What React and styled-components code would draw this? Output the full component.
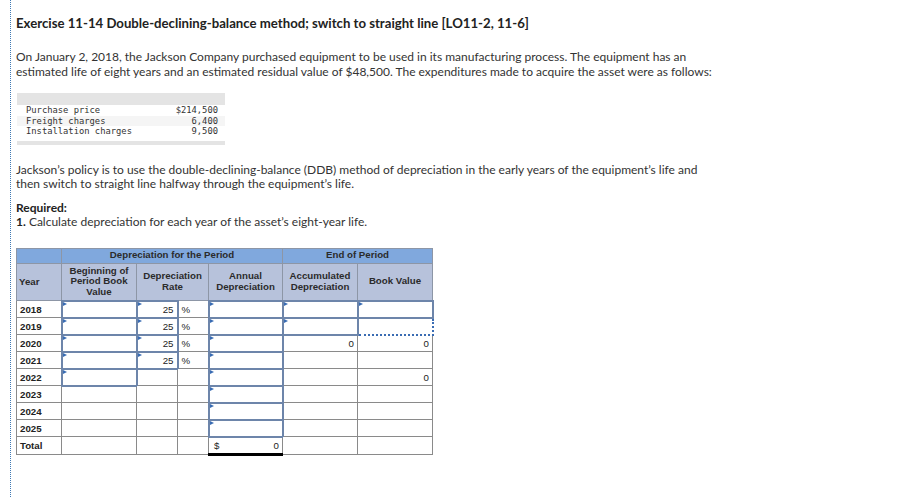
import React from "react";
import styled, { createGlobalStyle, css } from "styled-components";

const Global = createGlobalStyle`
  html, body { margin: 0; padding: 0; background: #fff; }
  body { font-family: Lato, "Open Sans", sans-serif; color: #333; }
`;

const Page = styled.div`
  margin-left: 10px;
  border-left: 1px dotted #3f79b4;
  min-height: 497px;
  box-sizing: border-box;
  padding: 15px 0 0 5px;
  display: flex;
  flex-direction: column;
  align-items: flex-start;
`;

const Title = styled.h1`
  margin: 0;
  font-size: 13.2px;
  line-height: 16px;
  font-weight: 700;
  color: #222;
`;

const Para = styled.p`
  margin: ${(p) => p.$mt || 0}px 0 0 0;
  font-size: 12px;
  line-height: ${(p) => p.$lh || 15}px;
  color: #333;
`;

const Strong = styled.strong`
  font-weight: 700;
  color: #222;
`;

const CostBox = styled.table`
  margin: 14px 0 0 1px;
  width: 208px;
  border-collapse: collapse;
  font-family: "DejaVu Sans Mono", "Liberation Mono", monospace;
  font-size: 8.8px;
  color: #333;
`;

const Band = styled.td`
  background: #e4e4e4;
  height: ${(p) => p.$h}px;
  padding: 0;
`;

const Spacer = styled.td`
  height: ${(p) => p.$h}px;
  padding: 0;
  background: #fff;
`;

const CostRow = styled.tr`
  background: ${(p) => (p.$alt ? "#f5f5f5" : "#fff")};
`;

const CostLabel = styled.td`
  padding: 0 0 0 9px;
  height: 10.5px;
  line-height: 10.5px;
  white-space: pre;
  font-family: "DejaVu Sans Mono", "Liberation Mono", monospace;
  font-size: 8.8px;
  color: #333;
`;

const CostValue = styled(CostLabel)`
  padding: 0 7px 0 0;
  text-align: right;
`;

const Grid = styled.table`
  margin-top: 19px;
  border-collapse: collapse;
  table-layout: fixed;
  font-family: "Liberation Sans", Arial, sans-serif;
  font-size: 9.7px;
  color: #222;
`;

const Col = styled.col`
  width: ${(p) => p.$w}px;
`;

const Head = styled.th`
  border: 1px solid #8d96a6;
  padding: 0 2px;
  font-family: "Liberation Sans", Arial, sans-serif;
  font-size: 9.7px;
  font-weight: 700;
  color: #2b2b2b;
  line-height: 10.5px;
  text-align: ${(p) => p.$align || "center"};
  background: ${(p) => (p.$top ? "#80a8dd" : "#b7c2db")};
  height: ${(p) => (p.$top ? 14 : 36)}px;
`;

const inputLook = css`
  border: 2px solid #6d85aa;
  &::before {
    content: "";
    position: absolute;
    top: 0;
    left: 0;
    border-left: 4px solid #3a6cb3;
    border-top: 2.5px solid transparent;
    border-bottom: 2.5px solid transparent;
  }
`;

const Cell = styled.td`
  position: relative;
  height: 15px;
  padding: 0 3px;
  border: 1px solid #8a8a8a;
  background: #fff;
  font-family: "Liberation Sans", Arial, sans-serif;
  font-size: 9.7px;
  color: #222;
  line-height: 13px;
  white-space: nowrap;
  text-align: ${(p) => p.$align || "right"};
  font-weight: ${(p) => (p.$bold ? 700 : 400)};
  ${(p) => p.$kind === "input" && inputLook}
  ${(p) =>
    p.$kind === "focus" &&
    css`
      border: 2px dotted #3a6cb3;
    `}
  ${(p) =>
    p.$kind === "total" &&
    css`
      border-top: 1px solid #333;
      border-bottom: 3px solid #000;
    `}
`;

const TotalInner = styled.div`
  display: flex;
  justify-content: space-between;
  padding-left: 2px;
`;

const rows = [
  { year: "2018", beg: "in", rate: "25", ann: "in", acc: "in", book: "in" },
  { year: "2019", beg: "in", rate: "25", ann: "in", acc: "in", book: "focus" },
  { year: "2020", beg: "in", rate: "25", ann: "in", acc: "0", book: "0" },
  { year: "2021", beg: "in", rate: "25", ann: "in", acc: "", book: "" },
  { year: "2022", beg: "in", rate: null, ann: "in", acc: "", book: "0" },
  { year: "2023", beg: "", rate: null, ann: "in", acc: "", book: "" },
  { year: "2024", beg: "", rate: null, ann: "in", acc: "", book: "" },
  { year: "2025", beg: "", rate: null, ann: "in", acc: "", book: "" },
];

function Value({ v }) {
  if (v === "in") return <Cell $kind="input" />;
  if (v === "focus") return <Cell $kind="focus" />;
  return <Cell>{v}</Cell>;
}

const costs = [
  ["Purchase price", "$214,500"],
  ["Freight charges", "6,400"],
  ["Installation charges", "9,500"],
];

export default function App() {
  return (
    <>
      <Global />
      <Page>
        <Title>
          Exercise 11-14 Double-declining-balance method; switch to straight line [LO11-2, 11-6]
        </Title>
        <Para $mt={18}>
          On January 2, 2018, the Jackson Company purchased equipment to be used in its manufacturing process. The equipment has an
          <br />
          estimated life of eight years and an estimated residual value of $48,500. The expenditures made to acquire the asset were as follows:
        </Para>
        <CostBox>
          <tbody>
            <tr>
              <Band colSpan={2} $h={12} />
            </tr>
            {costs.map(([l, v], i) => (
              <CostRow key={l} $alt={i === 1}>
                <CostLabel>{l}</CostLabel>
                <CostValue>{v}</CostValue>
              </CostRow>
            ))}
            <tr>
              <Spacer colSpan={2} $h={4} />
            </tr>
            <tr>
              <Band colSpan={2} $h={4} />
            </tr>
          </tbody>
        </CostBox>
        <Para $mt={18} $lh={14.5}>
          Jackson’s policy is to use the double-declining-balance (DDB) method of depreciation in the early years of the equipment’s life and
          <br />
          then switch to straight line halfway through the equipment’s life.
        </Para>
        <Para $mt={9} $lh={14}>
          <Strong>Required:</Strong>
          <br />
          <Strong>1.</Strong> Calculate depreciation for each year of the asset’s eight-year life.
        </Para>
        <Grid>
          <colgroup>
            <Col $w={45} />
            <Col $w={75} />
            <Col $w={41} />
            <Col $w={31} />
            <Col $w={74} />
            <Col $w={75} />
            <Col $w={75} />
          </colgroup>
          <thead>
            <tr>
              <Head $top />
              <Head $top colSpan={4}>Depreciation for the Period</Head>
              <Head $top colSpan={2}>End of Period</Head>
            </tr>
            <tr>
              <Head $align="left">Year</Head>
              <Head>
                Beginning of
                <br />
                Period Book
                <br />
                Value
              </Head>
              <Head colSpan={2}>
                Depreciation
                <br />
                Rate
              </Head>
              <Head>
                Annual
                <br />
                Depreciation
              </Head>
              <Head>
                Accumulated
                <br />
                Depreciation
              </Head>
              <Head>Book Value</Head>
            </tr>
          </thead>
          <tbody>
            {rows.map((r) => (
              <tr key={r.year}>
                <Cell $align="left" $bold>
                  {r.year}
                </Cell>
                <Value v={r.beg} />
                {r.rate ? <Cell $kind="input">{r.rate}</Cell> : <Cell />}
                <Cell $align="left">{r.rate ? "%" : ""}</Cell>
                <Value v={r.ann} />
                <Value v={r.acc} />
                <Value v={r.book} />
              </tr>
            ))}
            <tr>
              <Cell $align="left" $bold>
                Total
              </Cell>
              <Cell />
              <Cell />
              <Cell />
              <Cell $kind="total">
                <TotalInner>
                  <span>$</span>
                  <span>0</span>
                </TotalInner>
              </Cell>
              <Cell />
              <Cell />
            </tr>
          </tbody>
        </Grid>
      </Page>
    </>
  );
}
